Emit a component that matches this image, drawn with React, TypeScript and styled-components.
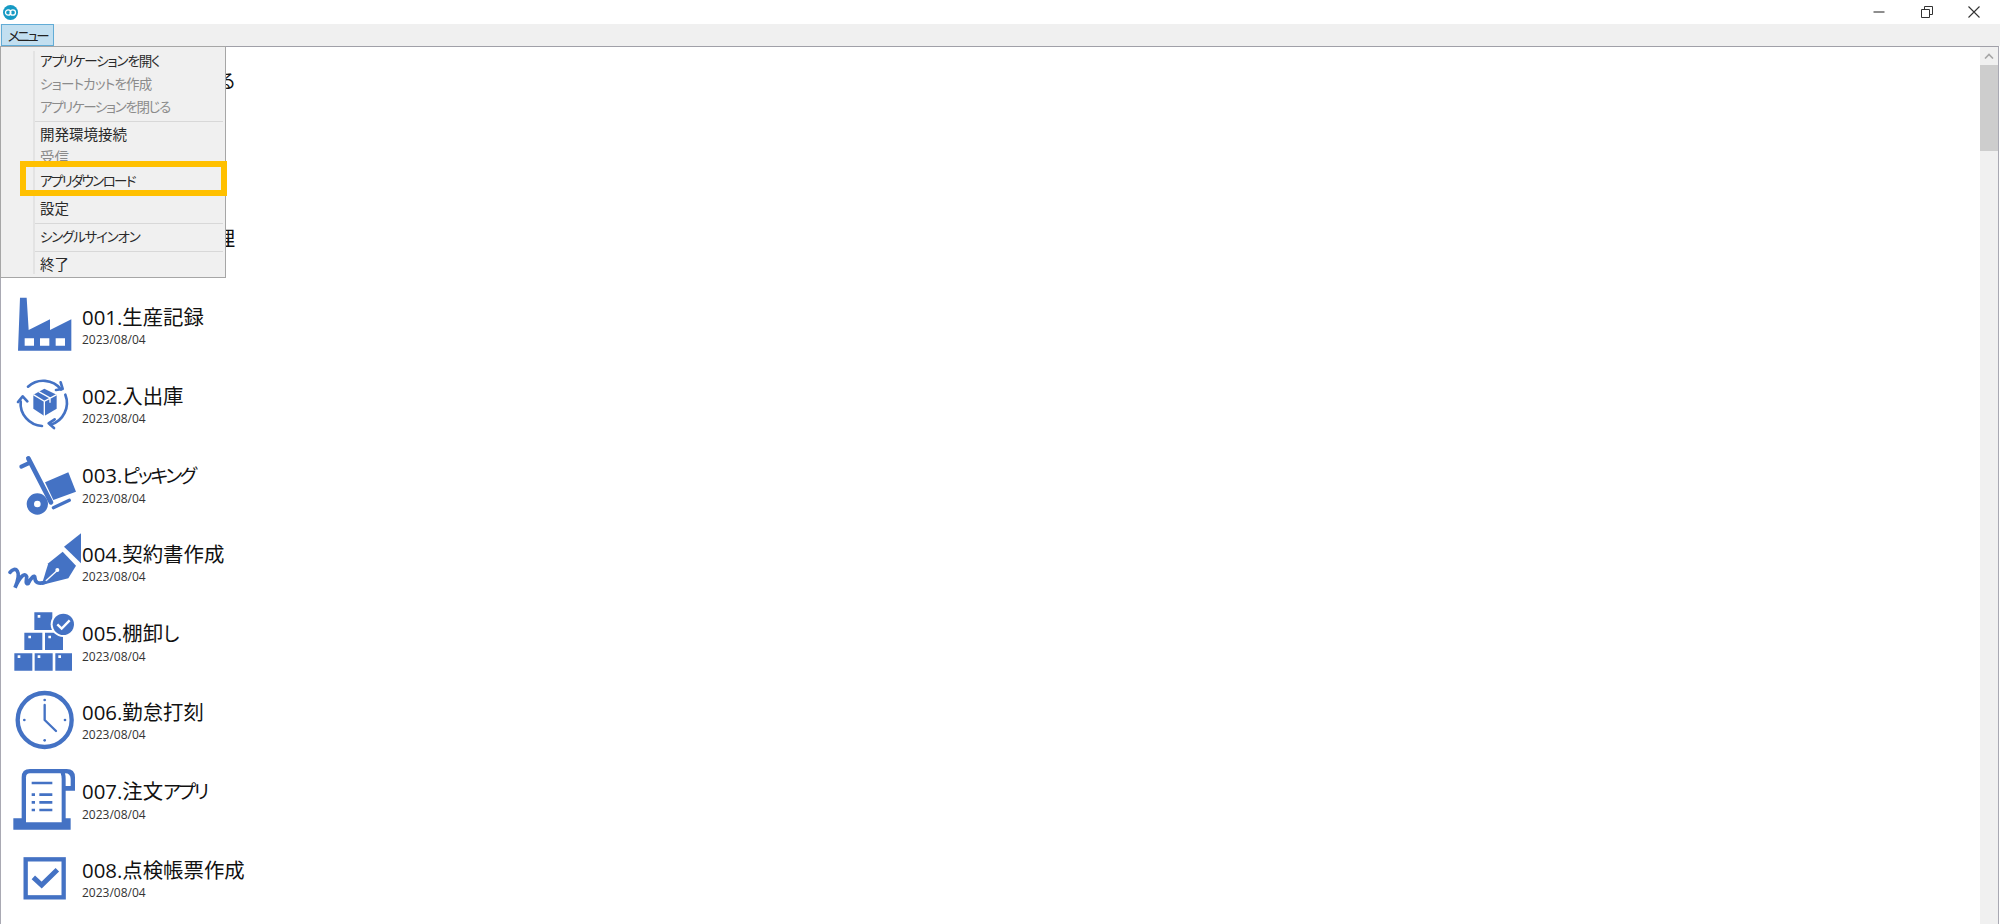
import React from "react"
import styled, { createGlobalStyle } from "styled-components"

const BLUE = "#4472c4"

const GlobalStyle = createGlobalStyle`
  html, body {
    margin: 0;
    padding: 0;
    background: #fff;
  }
  * {
    box-sizing: border-box;
  }
`

const Window = styled.div`
  width: 2000px;
  height: 924px;
  display: flex;
  flex-direction: column;
  overflow: hidden;
  background: #fff;
  font-family: "Open Sans", "Noto Sans CJK JP", sans-serif;
  font-feature-settings: "palt";
  color: #111;
`

const TitleBar = styled.div`
  height: 24px;
  flex: none;
  display: flex;
  align-items: center;
  justify-content: space-between;
  padding: 0 2px 0 3px;
`

const WindowButtons = styled.div`
  display: flex;
`

const WindowButton = styled.div`
  width: 47.5px;
  height: 24px;
  display: flex;
  align-items: center;
  justify-content: center;
`

const MenuBar = styled.div`
  position: relative;
  height: 22px;
  flex: none;
  background: #f0f0f0;
  padding-left: 1px;
`

const MenuButton = styled.div`
  width: 53px;
  height: 22px;
  display: flex;
  align-items: center;
  justify-content: center;
  background: #c2dff0;
  border: 1px solid #62acd6;
  font-size: 13.5px;
  letter-spacing: -2.4px;
  color: #222;
`

const Dropdown = styled.div`
  position: absolute;
  left: 0;
  top: 100%;
  width: 226px;
  height: 232px;
  z-index: 5;
  background: #f0f0f0;
  border: 1px solid #a6a6a6;
  padding: 3px 2px 0 32px;
`

const MenuPanel = styled.div`
  position: relative;
  padding-left: 2px;

  &::before {
    content: "";
    position: absolute;
    left: 0;
    top: 1px;
    bottom: 3px;
    width: 2px;
    background: #e3e3e3;
  }
`

const MenuEntry = styled.div<{ $disabled?: boolean; $tight?: number }>`
  position: relative;
  height: 23px;
  line-height: 22px;
  padding-left: 5px;
  font-size: ${(p) => (p.$tight === undefined ? 14.5 : 13.5)}px;
  white-space: nowrap;
  letter-spacing: ${(p) => p.$tight ?? 0}px;
  color: ${(p) => (p.$disabled ? "#8b8b8b" : "#2a2a2a")};
`

const Separator = styled.div`
  height: 5px;
  display: flex;
  align-items: center;

  &::after {
    content: "";
    flex: 1;
    height: 1px;
    background: #d8d8d8;
  }
`

const Callout = styled.div`
  position: absolute;
  left: -15px;
  right: -4px;
  top: -9px;
  bottom: -3px;
  border: 6px solid #ffc000;
`

const Content = styled.div`
  flex: 1;
  min-height: 0;
  display: flex;
  border-top: 1px solid #a0a0a8;
  border-left: 1px solid #a9a9b3;
  margin-right: 1px;
  border-right: 1px solid #a9a9b3;
`

const AppList = styled.div`
  flex: 1;
  padding-top: 1px;
`

const AppRow = styled.div`
  height: 79px;
  display: flex;
`

const IconCell = styled.div`
  width: 81px;
  flex: none;

  svg {
    display: block;
    overflow: visible;
  }
`

const AppText = styled.div`
  padding-top: 19px;
`

const AppTitle = styled.div`
  font-size: 20.4px;
  line-height: 26px;
  white-space: nowrap;
`

const Kana = styled.span`
  font-size: 19px;
  letter-spacing: -2.3px;
`

const AppDate = styled.div`
  margin-top: 2px;
  font-size: 12px;
  line-height: 16px;
  color: #333;
`

const Scrollbar = styled.div`
  width: 18px;
  flex: none;
  background: #f0f0f0;
  display: flex;
  flex-direction: column;
`

const ScrollArrow = styled.div`
  height: 18px;
  display: flex;
  align-items: center;
  justify-content: center;
`

const ScrollThumb = styled.div`
  height: 86px;
  background: #cdcdcd;
`

const Logo = () => (
  <svg width="15" height="15" viewBox="0 0 15 15">
    <circle cx="7.5" cy="7.5" r="7.5" fill="#169ac4" />
    <circle cx="5.2" cy="7.5" r="2.7" fill="none" stroke="#fff" strokeWidth="1.3" />
    <circle cx="9.8" cy="7.5" r="2.7" fill="none" stroke="#fff" strokeWidth="1.3" />
  </svg>
)

// every icon is drawn in 3x pixels of its row, so 237 units = one 79px row
const Icon = ({ offset = 0, children }: { offset?: number; children: React.ReactNode }) => (
  <svg width="82" height="79" viewBox={`3 ${offset} 246 237`} fill={BLUE}>
    {children}
  </svg>
)

const FactoryIcon = () => (
  <Icon>
    <path d="M60 38H80L86 135L150 103V135L214 103V197H54Z" />
    <path fill="#fff" d="M74 160H102V182H74ZM120 160H148V182H120ZM167 160H195V182H167Z" />
  </Icon>
)

const StockIcon = () => (
  <Icon>
    <g fill="none" stroke={BLUE} strokeWidth="8" strokeLinecap="round" strokeLinejoin="round">
      <path d="M84 68A68 68 0 0 1 183 76" />
      <path d="M182 55L188 75L168 78" />
      <path d="M62 112A68 68 0 0 0 126 186" />
      <path d="M54 114L68 97L82 112" />
      <path d="M196 92A68 68 0 0 1 152 182" />
      <path d="M164 166L146 178L162 192" />
    </g>
    <path d="M133 74L170 92V134L133 156L100 134V92Z" />
    <path
      fill="none"
      stroke="#fff"
      strokeWidth="4"
      d="M100 92L133 112L170 92M133 112V156M116 83L150 102V116"
    />
  </Icon>
)

const CartIcon = () => (
  <Icon offset={9}>
    <g fill="none" stroke={BLUE} strokeLinecap="round">
      <path strokeWidth="12" d="M64 80L90 68" />
      <path strokeWidth="14" d="M85 55L153 187" />
      <path strokeWidth="10" d="M160 203L208 181" />
    </g>
    <path d="M135 127L205 97L228 155L160 180Z" />
    <circle cx="112" cy="192" r="21" fill="none" stroke={BLUE} strokeWidth="22" />
  </Icon>
)

const PenIcon = () => (
  <Icon offset={51}>
    <path d="M243 85V175L192 125Z" />
    <path d="M188 140L228 182L205 220L125 240L145 175Z" />
    <path fill="none" stroke="#fff" strokeWidth="4" d="M133 232L170 198" />
    <circle cx="172" cy="195" r="6" fill="#fff" />
    <path
      fill="none"
      stroke={BLUE}
      strokeWidth="11"
      strokeLinecap="round"
      d="M30 202C45 182 68 195 45 248C60 215 75 200 80 215C80 225 75 240 85 235C92 220 105 205 105 220C105 232 115 238 135 232"
    />
  </Icon>
)

const StackIcon = () => (
  <Icon offset={288}>
    <path d="M103 322H157V375H103ZM73 383H127V435H73ZM135 383H189V435H135ZM43 445H97V497H43ZM104 445H158V497H104ZM166 445H216V497H166Z" />
    <path
      fill="#fff"
      d="M113 330H121V338H113ZM85 392H93V400H85ZM145 392H153V400H145ZM53 451H61V459H53ZM113 451H121V459H113ZM175 451H183V459H175Z"
    />
    <circle cx="190" cy="358" r="38" fill="#fff" />
    <circle cx="190" cy="358" r="32" />
    <path fill="none" stroke="#fff" strokeWidth="7" d="M172 358L185 371L209 346" />
  </Icon>
)

const ClockIcon = () => (
  <Icon>
    <circle cx="134" cy="120" r="81" fill="none" stroke={BLUE} strokeWidth="13" />
    <circle cx="134" cy="60" r="4" />
    <circle cx="195" cy="120" r="4" />
    <circle cx="134" cy="181" r="4" />
    <circle cx="73" cy="120" r="4" />
    <path
      fill="none"
      stroke={BLUE}
      strokeWidth="7"
      strokeLinecap="round"
      strokeLinejoin="round"
      d="M134 75V120L168 153"
    />
  </Icon>
)

const OrderIcon = () => (
  <Icon offset={135}>
    <path d="M65 190Q65 165 90 165H200Q225 165 225 190V230H197V313H212V347H40V313H65Z" />
    <path fill="#fff" d="M78 190Q78 178 90 178H182Q185 186 185 195V325H78Z" />
    <path fill="#fff" d="M195 178Q212 178 212 195V216H197V195Q197 185 195 178Z" />
    <path
      fill="none"
      stroke={BLUE}
      strokeWidth="8"
      d="M95 207H157M95 242H105M118 242H157M95 265H105M118 265H157M95 288H105M118 288H157"
    />
  </Icon>
)

const CheckIcon = () => (
  <Icon offset={372}>
    <rect x="77" y="436" width="114" height="114" fill="none" stroke={BLUE} strokeWidth="13" />
    <path fill="none" stroke={BLUE} strokeWidth="15" d="M100 490L125 513L172 467" />
  </Icon>
)

const DATE = "2023/08/04"

const APPS: { title: React.ReactNode; icon?: React.ReactNode }[] = [
  { title: <>000.<Kana>アプリを</Kana>開<Kana>ける</Kana></> },
  { title: <>000.<Kana>アプリ</Kana></> },
  { title: <>000.<Kana>ログ</Kana>集計管理</> },
  { title: "001.生産記録", icon: <FactoryIcon /> },
  { title: "002.入出庫", icon: <StockIcon /> },
  { title: <>003.<Kana>ピッキング</Kana></>, icon: <CartIcon /> },
  { title: "004.契約書作成", icon: <PenIcon /> },
  { title: <>005.棚卸<Kana>し</Kana></>, icon: <StackIcon /> },
  { title: "006.勤怠打刻", icon: <ClockIcon /> },
  { title: <>007.注文<Kana>アプリ</Kana></>, icon: <OrderIcon /> },
  { title: "008.点検帳票作成", icon: <CheckIcon /> },
]

type MenuItem = {
  label?: string
  disabled?: boolean
  marked?: boolean
  tight?: number
  sep?: boolean
}

const MENU: MenuItem[] = [
  { label: "アプリケーションを開く", tight: -1.1 },
  { label: "ショートカットを作成", disabled: true, tight: -0.77 },
  { label: "アプリケーションを閉じる", disabled: true, tight: -1.35 },
  { sep: true },
  { label: "開発環境接続" },
  { label: "受信", disabled: true },
  { label: "アプリダウンロード", marked: true, tight: -1.65 },
  { sep: true },
  { label: "設定" },
  { sep: true },
  { label: "シングルサインオン", tight: -1.2 },
  { sep: true },
  { label: "終了" },
]

const App = () => {
  return (
    <Window>
      <GlobalStyle />
      <TitleBar>
        <Logo />
        <WindowButtons>
          <WindowButton>
            <svg width="12" height="12" viewBox="0 0 12 12">
              <path d="M0.5 6H11.5" stroke="#444" strokeWidth="1.2" />
            </svg>
          </WindowButton>
          <WindowButton>
            <svg width="12" height="12" viewBox="0 0 12 12" fill="none" stroke="#333" strokeWidth="1">
              <path d="M0.5 3.5H8.5V11.5H0.5Z" />
              <path d="M3.5 3.5V0.5H11.5V8.5H8.5" />
            </svg>
          </WindowButton>
          <WindowButton>
            <svg width="12" height="12" viewBox="0 0 12 12" stroke="#333" strokeWidth="1.1">
              <path d="M0.5 0.5L11.5 11.5M11.5 0.5L0.5 11.5" />
            </svg>
          </WindowButton>
        </WindowButtons>
      </TitleBar>
      <MenuBar>
        <MenuButton>メニュー</MenuButton>
        <Dropdown>
          <MenuPanel>
            {MENU.map((item, i) =>
              item.sep ? (
                <Separator key={i} />
              ) : (
                <MenuEntry key={i} $disabled={item.disabled} $tight={item.tight}>
                  {item.label}
                  {item.marked && <Callout />}
                </MenuEntry>
              )
            )}
          </MenuPanel>
        </Dropdown>
      </MenuBar>
      <Content>
        <AppList>
          {APPS.map((app, i) => (
            <AppRow key={i}>
              <IconCell>{app.icon}</IconCell>
              <AppText>
                <AppTitle>{app.title}</AppTitle>
                <AppDate>{DATE}</AppDate>
              </AppText>
            </AppRow>
          ))}
        </AppList>
        <Scrollbar>
          <ScrollArrow>
            <svg width="10" height="6" viewBox="0 0 10 6" fill="none" stroke="#a6a6a6" strokeWidth="1.6">
              <path d="M1 5.5L5 1.5L9 5.5" />
            </svg>
          </ScrollArrow>
          <ScrollThumb />
        </Scrollbar>
      </Content>
    </Window>
  )
}

export default App
